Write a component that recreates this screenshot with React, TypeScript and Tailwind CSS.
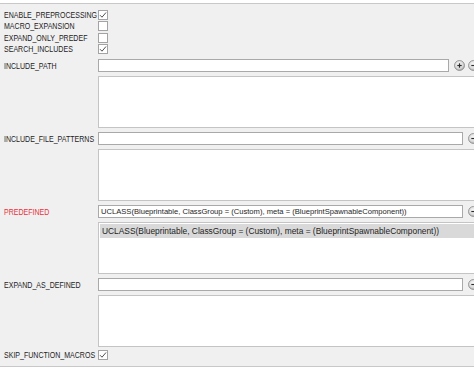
import React from 'react';

const font = { fontFamily: '"Liberation Sans", Arial, sans-serif' };

const Check: React.FC<{ checked?: boolean }> = ({ checked }) => (
  <div className="w-[10px] h-[10px] bg-white border border-[#a3a3a3] flex items-center justify-center">
    {checked && (
      <svg width="8" height="8" viewBox="0 0 8 8">
        <path d="M1 4.2 L3 6.2 L7 1.5" fill="none" stroke="#3c3c3c" strokeWidth="0.9" />
      </svg>
    )}
  </div>
);

const RoundButton: React.FC<{ plus?: boolean; className?: string }> = ({ plus, className }) => (
  <svg width="11" height="11" viewBox="0 0 11 11" className={className}>
    <defs>
      <radialGradient id={plus ? 'gp' : 'gm'} cx="45%" cy="40%" r="60%">
        <stop offset="0%" stopColor="#ffffff" />
        <stop offset="70%" stopColor="#d4d4d4" />
        <stop offset="100%" stopColor="#9c9c9c" />
      </radialGradient>
    </defs>
    <circle cx="5.5" cy="5.5" r="5" fill={`url(#${plus ? 'gp' : 'gm'})`} stroke="#8a8a8a" strokeWidth="0.8" />
    <path d="M3.3 5.5 H7.7" stroke="#2a2a2a" strokeWidth="1.2" />
    {plus && <path d="M5.5 3.3 V7.7" stroke="#2a2a2a" strokeWidth="1.2" />}
  </svg>
);

const Label: React.FC<{ text: string; red?: boolean }> = ({ text, red }) => (
  <div className="w-[98px] shrink-0 pl-[4px] whitespace-nowrap">
    <span
      className={`block origin-left scale-x-[0.8] text-[8.8px] leading-[10px] ${
        red ? 'text-[#e8323c]' : 'text-[#1e1e1e]'
      }`}
    >
      {text}
    </span>
  </div>
);

const CheckRow: React.FC<{ label: string; checked?: boolean }> = ({ label, checked }) => (
  <div className="flex items-center h-[11.5px]">
    <Label text={label} />
    <Check checked={checked} />
  </div>
);

const InputRow: React.FC<{ label: string; red?: boolean; value?: string; plus?: boolean }> = ({
  label,
  red,
  value,
  plus,
}) => (
  <div className="flex items-center h-[13px]">
    <Label text={label} red={red} />
    <div
      className={`${plus ? 'w-[351px]' : 'w-[365px]'} h-[13px] shrink-0 bg-white border border-[#a9a9a9] pl-[2px] text-[7.6px] leading-[11px] text-[#1e1e1e] whitespace-nowrap overflow-hidden`}
    >
      {value}
    </div>
    {plus && <RoundButton plus className="ml-[5px] shrink-0" />}
    <RoundButton className={`${plus ? 'ml-[3px]' : 'ml-[5px]'} shrink-0`} />
  </div>
);

const Area: React.FC<{ children?: React.ReactNode }> = ({ children }) => (
  <div className="flex">
    <div className="w-[98px] shrink-0" />
    <div className="w-[384px] shrink-0 h-[52px] bg-white border border-[#c4c4c4] pt-[1px] pl-[1px]">
      {children}
    </div>
  </div>
);

const macro = 'UCLASS(Blueprintable, ClassGroup = (Custom), meta = (BlueprintSpawnableComponent))';

export default function App() {
  return (
    <div className="w-[474px] h-[369px] bg-white overflow-hidden" style={font}>
      <div className="w-[490px] mt-[3px] border-t border-b border-[#c8c8c8] bg-[#f0f0f0] pt-[5px] pb-[5px] flex flex-col">
        <CheckRow label="ENABLE_PREPROCESSING" checked />
        <CheckRow label="MACRO_EXPANSION" />
        <CheckRow label="EXPAND_ONLY_PREDEF" />
        <CheckRow label="SEARCH_INCLUDES" checked />
        <div className="flex flex-col gap-[4px] mt-[4px]">
          <InputRow label="INCLUDE_PATH" plus />
          <Area />
          <InputRow label="INCLUDE_FILE_PATTERNS" />
          <Area />
          <InputRow label="PREDEFINED" red value={macro} />
          <Area>
            <div className="h-[14px] bg-[#d9d9d9] pl-[2px] text-[8.4px] leading-[14px] text-[#1e1e1e] whitespace-nowrap">
              {macro}
            </div>
          </Area>
          <InputRow label="EXPAND_AS_DEFINED" />
          <Area />
        </div>
        <div className="mt-[2px]">
          <CheckRow label="SKIP_FUNCTION_MACROS" checked />
        </div>
      </div>
    </div>
  );
}
